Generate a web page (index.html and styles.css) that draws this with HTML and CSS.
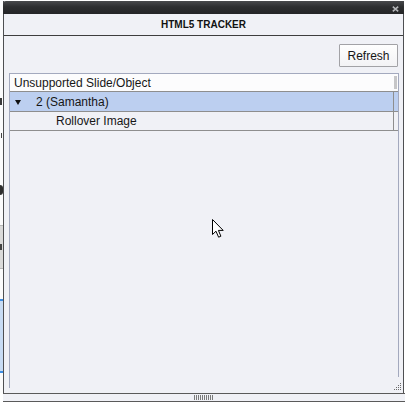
FILE: index.html
```html
<!DOCTYPE html>
<html lang="en">
<head>
    <meta charset="UTF-8">
    <title>HTML5 Tracker</title>
    <link rel="stylesheet" href="styles.css">
</head>
<body>
    <div class="screen">
        <div class="desk">
            <!-- bits of the stage window peeking out behind the panel -->
            <div class="behind">
                <span class="ghost ghost-text"></span>
                <span class="ghost ghost-thin"></span>
                <span class="ghost ghost-dot"></span>
                <span class="ghost ghost-field"><i></i></span>
                <span class="ghost ghost-select"></span>
            </div>

            <div class="panel">
                <div class="titlebar">
                    <svg class="close" width="7" height="6" viewBox="0 0 7 6">
                        <path d="M0.8 0.6 L6.2 5.4 M6.2 0.6 L0.8 5.4" stroke="#b4b5b8" stroke-width="1.6"/>
                    </svg>
                </div>
                <div class="caption">HTML5 TRACKER</div>

                <div class="content">
                    <div class="toolbar">
                        <button class="btn">Refresh</button>
                    </div>

                    <div class="tree">
                        <div class="tree-row tree-head">
                            <div class="cell">Unsupported Slide/Object</div>
                            <div class="spacer"><i class="handle"></i></div>
                        </div>
                        <div class="tree-row selected">
                            <div class="cell"><span class="arrow"></span>2 (Samantha)</div>
                            <div class="spacer"></div>
                        </div>
                        <div class="tree-row child">
                            <div class="cell">Rollover Image</div>
                            <div class="spacer"></div>
                        </div>
                    </div>

                    <svg class="grip" width="11" height="16" viewBox="0 0 11 16">
                        <rect x="8" y="6" width="1" height="1" fill="#6b6b6b"/>
                        <rect x="6" y="8" width="1" height="1" fill="#6b6b6b"/>
                        <rect x="8" y="8" width="1" height="1" fill="#6b6b6b"/>
                        <rect x="4" y="10" width="1" height="1" fill="#6b6b6b"/>
                        <rect x="6" y="10" width="1" height="1" fill="#6b6b6b"/>
                        <rect x="8" y="10" width="1" height="1" fill="#6b6b6b"/>
                        <rect x="2" y="12" width="1" height="1" fill="#6b6b6b"/>
                        <rect x="4" y="12" width="1" height="1" fill="#6b6b6b"/>
                        <rect x="6" y="12" width="1" height="1" fill="#6b6b6b"/>
                        <rect x="8" y="12" width="1" height="1" fill="#6b6b6b"/>
                    </svg>
                </div>
            </div>
        </div>

        <div class="statusbar">
            <span class="ticks"></span>
        </div>

        <svg class="cursor" width="13" height="20" viewBox="0 0 13 20">
            <path d="M0.5 0.5 L0.5 15.5 L4 12.2 L6.6 18.2 L8.9 17.2 L6.4 11.4 L11.2 11.4 Z" fill="#fff" stroke="#000" stroke-width="1" stroke-linejoin="miter"/>
        </svg>
    </div>
</body>
</html>
```

FILE: styles.css
```css
:root {
    --panel-bg: #f0f1f6;
    --line: #8e8e8e;
    --frame: #a3a9be;
    --dark: #4e4f52;
}

body {
    margin: 0;
    background: #fff;
    font-family: "Liberation Sans", Arial, sans-serif;
    color: #161616;
}

.screen {
    position: relative;
    width: 405px;
    height: 402px;
    overflow: hidden;
}

.desk {
    display: flex;
    height: 393px;
}

/* behind the panel */
.behind {
    width: 3px;
    display: flex;
    flex-direction: column;
    background: #fbfbfc;
}

.ghost {
    display: block;
}

.ghost-text {
    margin-top: 98px;
    width: 2px;
    height: 7px;
    background: #3a3a3a;
}

.ghost-thin {
    margin-top: 28px;
    margin-left: 1px;
    width: 1px;
    height: 5px;
    background: #444;
}

.ghost-dot {
    margin-top: 47px;
    width: 3px;
    height: 10px;
    background: #2e2e2e;
    border-radius: 0 3px 3px 0;
}

.ghost-field {
    margin-top: 30px;
    height: 42px;
    background: #dadada;
    border-top: 1px solid #b8b8b8;
    border-bottom: 1px solid #b8b8b8;
    display: flex;
    align-items: center;
}

.ghost-field i {
    width: 2px;
    height: 6px;
    background: #444;
}

.ghost-select {
    margin-top: 30px;
    height: 70px;
    background: #c8dcf4;
    border-top: 2px solid #3d8de3;
    border-bottom: 2px solid #3d8de3;
}

/* the panel */
.panel {
    width: 399px;
    margin-top: 1px;
    display: flex;
    flex-direction: column;
    background: var(--panel-bg);
    border-left: 1px solid var(--dark);
    border-right: 1px solid var(--dark);
}

.titlebar {
    height: 13px;
    margin: 0 -1px;
    background: linear-gradient(#48494c, #2d2e30 45%, #242527);
    border-radius: 3px 0 0 0;
    display: flex;
    justify-content: flex-end;
    align-items: flex-start;
}

.close {
    margin: 5px 5px 0 0;
}

.caption {
    height: 21px;
    line-height: 22px;
    text-align: center;
    font-size: 10px;
    font-weight: bold;
    color: #111;
    border-bottom: 1px solid #3e3e3e;
}

.content {
    position: relative;
    flex: 1;
    display: flex;
    flex-direction: column;
    padding: 8px 4px 5px 5px;
}

.toolbar {
    display: flex;
    justify-content: flex-end;
    padding-right: 1px;
}

.btn {
    width: 59px;
    height: 23px;
    margin: 0;
    padding: 0;
    font-family: "Liberation Sans", Arial, sans-serif;
    font-size: 12px;
    color: #161616;
    background: linear-gradient(#fefefe, #f3f3f5);
    border: 1px solid #a2a2a6;
    border-radius: 1px;
}

.tree {
    flex: 1;
    margin-top: 6px;
    border-top: 1px solid var(--frame);
    border-left: 1px solid var(--frame);
    border-right: 1px solid var(--frame);
    font-size: 12px;
}

.tree-row {
    display: flex;
    border-bottom: 1px solid var(--line);
}

.tree-row .cell {
    flex: 1;
    display: flex;
    align-items: center;
    border-right: 1px solid var(--line);
}

.tree-row .spacer {
    width: 4px;
}

.tree-head {
    height: 17px;
    background: #fcfcfd;
}

.tree-head .cell {
    padding-left: 4px;
    border-right: 0;
}

.tree-head .spacer {
    display: flex;
    align-items: center;
    margin-left: -1px;
}

.handle {
    width: 3px;
    height: 13px;
    background: #c6c6c8;
}

.selected {
    height: 19px;
    background: #bccff0;
}

.selected .cell {
    padding-left: 5px;
}

.arrow {
    width: 0;
    height: 0;
    margin: 1px 15px 0 0;
    border-left: 3.5px solid transparent;
    border-right: 3.5px solid transparent;
    border-top: 5px solid #111;
}

.child {
    height: 18px;
}

.child .cell {
    padding-left: 46px;
}

.grip {
    position: absolute;
    right: 0;
    bottom: 0;
    background: var(--panel-bg);
}

/* bottom strip with the drag handle */
.statusbar {
    height: 7px;
    margin-left: 3px;
    background: var(--panel-bg);
    border-top: 1px solid #5a5a5a;
    border-bottom: 1px solid #5a5a5a;
    display: flex;
    justify-content: center;
    align-items: center;
}

.ticks {
    width: 20px;
    height: 5px;
    background: repeating-linear-gradient(90deg, #7a7a7a 0 1px, transparent 1px 2px);
}

.cursor {
    position: absolute;
    left: 212px;
    top: 219px;
}
```
